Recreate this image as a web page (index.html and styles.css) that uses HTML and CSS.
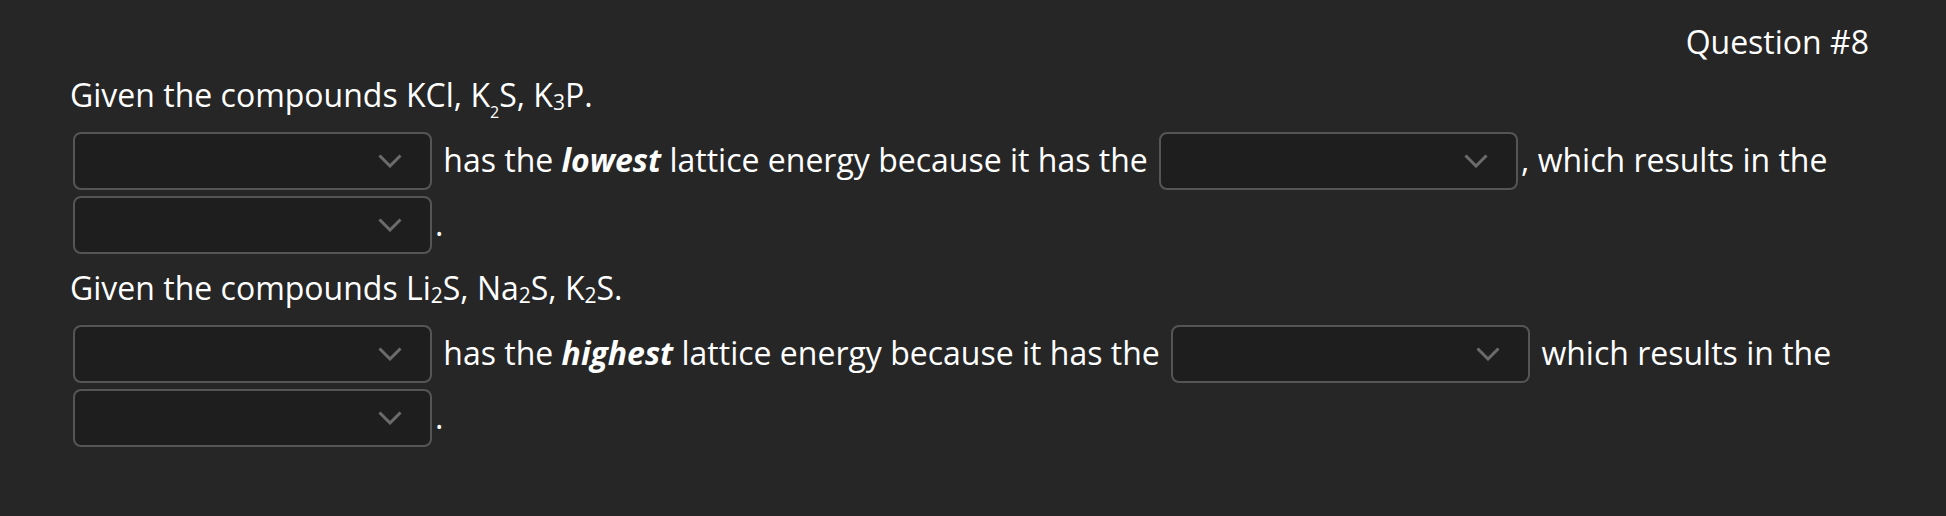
FILE: index.html
```html
<!doctype html>
<html>

<head>
    <meta charset="utf-8">
    <title>Question #8 - Lattice Energy</title>
    <!--Page styling-->
    <link rel="stylesheet" href="styles.css">
</head>

<body>
<div class="page">
    <!--Question number, top right-->
    <p class="qnum">Question #8</p>

    <!--First part-->
    <div class="question">
        <p class="prompt">Given the compounds KCl, K<sub class="drop">2</sub>S, K<sub class="low">3</sub>P.</p>
        <p class="answer"><span class="dropdown" role="combobox"><svg class="chev" width="24" height="14" viewBox="0 0 24 14"><polyline points="1.5,1.5 12,12 22.5,1.5"/></svg></span> has the <strong><em>lowest</em></strong> lattice energy because it has the <span class="dropdown" role="combobox"><svg class="chev" width="24" height="14" viewBox="0 0 24 14"><polyline points="1.5,1.5 12,12 22.5,1.5"/></svg></span>, which results in the <span class="dropdown" role="combobox"><svg class="chev" width="24" height="14" viewBox="0 0 24 14"><polyline points="1.5,1.5 12,12 22.5,1.5"/></svg></span>.</p>
    </div>

    <!--Second part-->
    <div class="question">
        <p class="prompt">Given the compounds Li<sub class="low">2</sub>S, Na<sub class="low">2</sub>S, K<sub class="low">2</sub>S.</p>
        <p class="answer"><span class="dropdown" role="combobox"><svg class="chev" width="24" height="14" viewBox="0 0 24 14"><polyline points="1.5,1.5 12,12 22.5,1.5"/></svg></span> has the <strong><em>highest</em></strong> lattice energy because it has the <span class="dropdown" role="combobox"><svg class="chev" width="24" height="14" viewBox="0 0 24 14"><polyline points="1.5,1.5 12,12 22.5,1.5"/></svg></span> which results in the <span class="dropdown" role="combobox"><svg class="chev" width="24" height="14" viewBox="0 0 24 14"><polyline points="1.5,1.5 12,12 22.5,1.5"/></svg></span>.</p>
    </div>
</div>
</body>

</html>
```
FILE: styles.css
```css
body{margin:0; background-color:#262626; color:#fff; font-family:"Open Sans", "Noto Sans", sans-serif; font-size:32px;}
.page{padding:18px 77px 0 70px;}
p{margin:0; line-height:48px;}
.qnum{text-align:right; margin-bottom:4px;}
.question{margin-top:5px;}
.prompt{margin-bottom:12px;}
/*Subscripts in the formulas*/
sub{line-height:0;}
sub.drop{font-size:16px; vertical-align:-11px;}
sub.low{font-size:21px; vertical-align:-3px;}
/*Empty drop down boxes*/
.dropdown{display:inline-flex; align-items:center; justify-content:flex-end; box-sizing:border-box; width:359px; height:58px; margin:1px 3px 5px; padding-right:28px; vertical-align:middle; background-color:#1e1e1e; border:2px solid #555; border-radius:8px;}
.chev{display:block; fill:none; stroke:#6b6b6b; stroke-width:3;}
```
